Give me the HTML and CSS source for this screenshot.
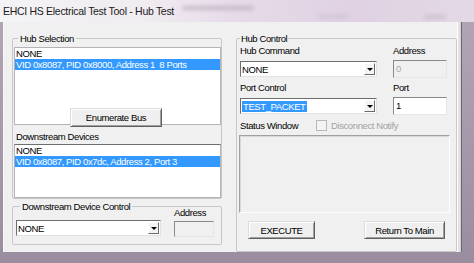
FILE: index.html
```html
<!DOCTYPE html>
<html lang="en">

<head>
    <meta charset="UTF-8">
    <meta name="viewport" content="width=device-width, initial-scale=1.0">
    <title>Hub Test</title>
    <link rel="stylesheet" href="styles.css">
</head>

<body>
    <div id="window">
        <div class="titlebar">
            EHCI HS Electrical Test Tool - Hub Test
            <!-- blurred desktop showing through the glass -->
            <span class="glass g1"></span>
            <span class="glass g2"></span>
            <span class="glass g3"></span>
        </div>
        <div class="client">
            <div class="col-left">
                <fieldset class="group hub-sel">
                    <legend>Hub Selection</legend>
                    <div class="listbox list-hubs">
                        <div class="item">NONE</div>
                        <div class="item selected">VID 0x8087, PID 0x8000, Address 1&nbsp; 8 Ports</div>
                        <button class="btn btn-enum">Enumerate Bus</button>
                    </div>
                    <div class="label ds-label">Downstream Devices</div>
                    <div class="listbox list-devs">
                        <div class="item">NONE</div>
                        <div class="item selected">VID 0x8087, PID 0x7dc, Address 2, Port 3</div>
                    </div>
                </fieldset>
                <fieldset class="group ds-ctrl">
                    <legend>Downstream Device Control</legend>
                    <div class="ds-row">
                        <div class="combo combo-ds">
                            <span class="combo-text">NONE</span>
                            <span class="combo-btn"><i></i></span>
                        </div>
                        <div class="field-col">
                            <div class="label">Address</div>
                            <div class="edit edit-ds disabled"></div>
                        </div>
                    </div>
                </fieldset>
            </div>
            <fieldset class="group hub-ctrl">
                <legend>Hub Control</legend>
                <div class="ctrl-grid">
                    <div class="label">Hub Command</div>
                    <div class="label">Address</div>
                    <div class="combo">
                        <span class="combo-text">NONE</span>
                        <span class="combo-btn"><i></i></span>
                    </div>
                    <div class="edit disabled">0</div>
                    <div class="label">Port Control</div>
                    <div class="label">Port</div>
                    <div class="combo">
                        <span class="combo-text"><span class="hilite">TEST_PACKET</span></span>
                        <span class="combo-btn"><i></i></span>
                    </div>
                    <div class="edit">1</div>
                </div>
                <div class="status-row">
                    <span class="label status-label">Status Window</span>
                    <span class="check"></span>
                    <span class="label grey">Disconnect Notify</span>
                </div>
                <div class="status-box"></div>
                <div class="btn-row">
                    <button class="btn btn-exec">EXECUTE</button>
                    <button class="btn btn-main">Return To Main</button>
                </div>
            </fieldset>
        </div>
    </div>
</body>

</html>
```

FILE: styles.css
```css
body {
    margin: 0;
    width: 474px;
    height: 263px;
    overflow: hidden;
    background: linear-gradient(to bottom, #b3a6b6, #9a8da0);
    font-family: "Liberation Sans", Arial, sans-serif;
    font-size: 9.5px;
    letter-spacing: -0.4px;
    color: #000;
}

#window {
    display: flex;
    flex-direction: column;
}

.titlebar {
    position: relative;
    height: 22px;
    padding-left: 3px;
    line-height: 23px;
    font-size: 10.5px;
    letter-spacing: -0.3px;
    color: #1c1c1c;
    background: linear-gradient(to right, #f4f3f5 0%, #f0ecf1 30%, #e6dae8 50%, #dfd1e2 75%, #e3d9e5 100%);
    overflow: hidden;
}

.glass {
    position: absolute;
    background: #9c8aa0;
    filter: blur(2px);
    opacity: 0.45;
    border-radius: 3px;
}

.g1 {
    left: 182px;
    top: 6px;
    width: 72px;
    height: 4px;
}

.g2 {
    left: 318px;
    top: 15px;
    width: 30px;
    height: 3px;
    opacity: 0.25;
}

.g3 {
    left: 424px;
    top: 15px;
    width: 22px;
    height: 4px;
    opacity: 0.3;
}

.client {
    display: flex;
    gap: 14px;
    margin-left: 3px;
    width: 455px;
    height: 230px;
    padding: 11px 0 0 8px;
    box-sizing: border-box;
    background: #f0f0f0;
    border-left: 1px solid #f8f8f8;
    border-right: 1px solid #ffffff;
    box-shadow: 1px 0 0 #e4e0e6, 2px 0 0 #e4e0e6, 3px 0 0 #d8d2da, 4px 0 0 #6f6872;
}

.col-left {
    display: flex;
    flex-direction: column;
    gap: 2px;
    width: 210px;
}

.group {
    margin: 0;
    min-width: 0;
    border: 1px solid #c8c8c8;
    border-radius: 2px;
}

.group legend {
    padding: 0 2px;
    margin-left: 4px;
    line-height: 11px;
}

.label {
    line-height: 11px;
    white-space: nowrap;
}

.grey {
    color: #a3a3a3;
}

/* list boxes */
.hub-sel {
    padding: 3px 0 0 1px;
}

.listbox {
    position: relative;
    width: 207px;
    box-sizing: border-box;
    background: #fff;
    border: 1px solid #b4b4b4;
}

.list-hubs {
    height: 78px;
}

.list-devs {
    height: 54px;
    border-top-color: #6e6e6e;
}

.item {
    line-height: 11px;
    padding-left: 1px;
    white-space: nowrap;
}

.selected {
    background: #3399ff;
    color: #fff;
}

.ds-label {
    padding: 6px 0 2px 2px;
}

/* buttons */
.btn {
    font: inherit;
    letter-spacing: inherit;
    padding: 0;
    background: #efefef;
    border: 1px solid;
    border-color: #dcdcdc #5f5f5f #5f5f5f #dcdcdc;
    box-shadow: inset 1px 1px #ffffff, inset -1px -1px #a0a0a0;
}

.btn-enum {
    position: absolute;
    left: 55px;
    top: 60px;
    width: 92px;
    height: 19px;
}

/* combo boxes and edits */
.combo {
    display: flex;
    align-items: center;
    height: 16px;
    box-sizing: border-box;
    background: #fff;
    border: 1px solid;
    border-color: #6d6d6d #e2e2e2 #e2e2e2 #6d6d6d;
}

.combo-text {
    flex: 1;
    padding-left: 1px;
    line-height: 11px;
    white-space: nowrap;
}

.hilite {
    background: #3399ff;
    color: #fff;
    padding: 0 2px 0 1px;
}

.combo-btn {
    display: flex;
    align-items: center;
    justify-content: center;
    width: 11px;
    height: 12px;
    margin-right: 1px;
    background: #f4f4f4;
    border: 1px solid;
    border-color: #ffffff #6a6a6a #6a6a6a #ffffff;
    box-sizing: border-box;
}

.combo-btn i {
    width: 0;
    height: 0;
    border-left: 3px solid transparent;
    border-right: 3px solid transparent;
    border-top: 3px solid #000;
    margin-top: 1px;
}

.edit {
    height: 18px;
    box-sizing: border-box;
    padding: 2px 0 0 2px;
    line-height: 11px;
    background: #fff;
    border: 1px solid;
    border-color: #8a8a8a #e6e6e6 #e6e6e6 #8a8a8a;
}

.disabled {
    background: #f0f0f0;
    color: #a8a8a8;
}

/* downstream device control */
.ds-ctrl {
    padding: 0 3px 7px 3px;
}

.ds-row {
    display: flex;
    align-items: flex-end;
    gap: 13px;
}

.combo-ds {
    width: 145px;
    margin-bottom: 1px;
}

.field-col {
    display: flex;
    flex-direction: column;
    gap: 3px;
    margin-top: -5px;
}

.edit-ds {
    width: 40px;
    height: 16px;
}

/* hub control */
.hub-ctrl {
    width: 221px;
    box-sizing: border-box;
    padding: 1px 3px 5px 3px;
}

.hub-ctrl legend {
    margin-left: 0;
    padding: 0 1px;
}

.ctrl-grid {
    display: grid;
    grid-template-columns: 137px 54px;
    column-gap: 16px;
    row-gap: 4px;
    align-items: center;
}

.status-row {
    display: flex;
    align-items: center;
    height: 11px;
    margin-top: 5px;
}

.status-label {
    width: 76px;
}

.check {
    width: 11px;
    height: 11px;
    box-sizing: border-box;
    margin-right: 4px;
    background: #f4f4f4;
    border: 1px solid #b8b8b8;
}

.status-box {
    margin: 4px 0 0 -1px;
    width: 211px;
    height: 78px;
    box-sizing: border-box;
    border: 1px solid;
    border-color: #a0a0a0 #ffffff #ffffff #a0a0a0;
    box-shadow: inset 1px 1px #d8d8d8;
}

.btn-row {
    display: flex;
    justify-content: space-between;
    margin-top: 8px;
    padding: 0 8px;
}

.btn-exec {
    width: 67px;
    height: 18px;
}

.btn-main {
    width: 81px;
    height: 18px;
}
```
